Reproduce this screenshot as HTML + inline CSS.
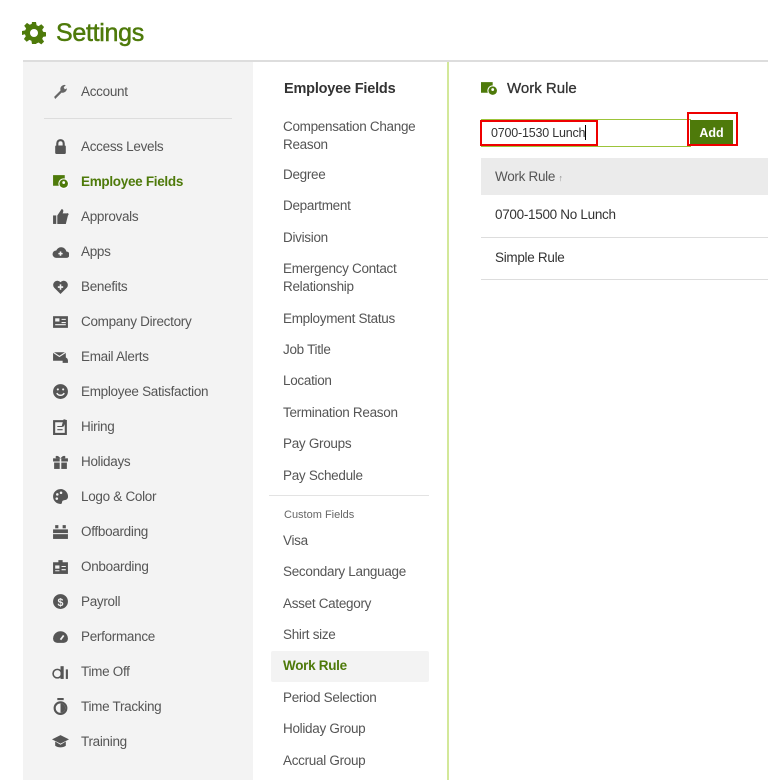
<!DOCTYPE html>
<html><head><meta charset="utf-8"><style>
*{margin:0;padding:0;box-sizing:border-box}
body{width:768px;height:780px;overflow:hidden;background:#fff;font-family:"Liberation Sans",sans-serif;color:#555;position:relative}
.a{position:absolute;white-space:nowrap}
.t{font-size:13.5px;letter-spacing:-0.3px;line-height:17px}
.ic{position:absolute;left:52px;width:17px;height:17px}
</style></head><body>
<svg class="a" style="left:22px;top:21px" width="24" height="24" viewBox="0 0 24 24"><path fill="#4e7a0a" d="M10 1h4l.6 3.2 2 .9 2.7-1.9 2.8 2.8-1.9 2.7.9 2 3.2.6v4l-3.2.6-.9 2 1.9 2.7-2.8 2.8-2.7-1.9-2 .9L14 23h-4l-.6-3.2-2-.9-2.7 1.9-2.8-2.8 1.9-2.7-.9-2L0 14v-4l3.2-.6.9-2L2.2 4.7 5 1.9l2.7 1.9 2-.9z"/><circle cx="12" cy="12" r="4" fill="#fff"/></svg>
<div class="a" style="left:56px;top:19px;font-size:25px;color:#4e7a0a;letter-spacing:-0.3px;-webkit-text-stroke:0.5px #4e7a0a">Settings</div>
<div class="a" style="left:23px;top:60px;width:745px;height:2px;background:#ddd"></div>
<div class="a" style="left:23px;top:62px;width:230px;height:718px;background:#f3f3f3"></div>
<div class="a" style="left:44px;top:118px;width:188px;height:1px;background:#ddd"></div>
<div class="a" style="left:447px;top:62px;width:2px;height:718px;background:#d3e89a"></div>

<div class="a t" style="left:81px;top:83px">Account</div>
<div class="a t" style="left:81px;top:138px">Access Levels</div>
<div class="a t" style="left:81px;top:173px;color:#4e7a0a;font-weight:bold">Employee Fields</div>
<div class="a t" style="left:81px;top:208px">Approvals</div>
<div class="a t" style="left:81px;top:243px">Apps</div>
<div class="a t" style="left:81px;top:278px">Benefits</div>
<div class="a t" style="left:81px;top:313px">Company Directory</div>
<div class="a t" style="left:81px;top:348px">Email Alerts</div>
<div class="a t" style="left:81px;top:383px">Employee Satisfaction</div>
<div class="a t" style="left:81px;top:418px">Hiring</div>
<div class="a t" style="left:81px;top:453px">Holidays</div>
<div class="a t" style="left:81px;top:488px">Logo &amp; Color</div>
<div class="a t" style="left:81px;top:523px">Offboarding</div>
<div class="a t" style="left:81px;top:558px">Onboarding</div>
<div class="a t" style="left:81px;top:593px">Payroll</div>
<div class="a t" style="left:81px;top:628px">Performance</div>
<div class="a t" style="left:81px;top:663px">Time Off</div>
<div class="a t" style="left:81px;top:698px">Time Tracking</div>
<div class="a t" style="left:81px;top:733px">Training</div>

<svg class="ic" style="top:83px" viewBox="0 0 16 16"><path fill="#666" d="M2 13l6-6a4 4 0 0 1 5-5l-2 2 1 2 2-1a4 4 0 0 1-5 4l-6 6z"/></svg>
<svg class="ic" style="top:138px" viewBox="0 0 16 16"><path fill="none" stroke="#555" stroke-width="2" d="M5 7V5a3 3 0 0 1 6 0v2"/><rect x="3" y="7" width="10" height="8" rx="1" fill="#555"/></svg>
<svg class="ic" style="top:173px" viewBox="0 0 16 16"><rect x="1" y="2" width="11" height="10" fill="#4e7a0a"/><circle cx="11" cy="10" r="5" fill="#fff"/><circle cx="11" cy="10" r="4" fill="#4e7a0a"/><circle cx="11" cy="9" r="1.3" fill="#fff"/></svg>
<svg class="ic" style="top:208px" viewBox="0 0 16 16"><rect x="1" y="7" width="3" height="8" fill="#555"/><path fill="#555" d="M5 7l4-6c2 0 2 2 1 4h4a1 1 0 0 1 1 2l-2 8H5z"/></svg>
<svg class="ic" style="top:243px" viewBox="0 0 16 16"><path fill="#555" d="M4 14a3.5 3.5 0 0 1 0-7 5 5 0 0 1 9.5 1 3 3 0 0 1 0 6z"/><path stroke="#f3f3f3" stroke-width="1.5" d="M8 8v4M6 10h4"/></svg>
<svg class="ic" style="top:278px" viewBox="0 0 16 16"><path fill="#555" d="M8 15L2 9a3.5 3.5 0 0 1 6-5 3.5 3.5 0 0 1 6 5z"/><path stroke="#f3f3f3" stroke-width="1.5" d="M8 6v5M5.5 8.5h5"/></svg>
<svg class="ic" style="top:313px" viewBox="0 0 16 16"><rect x="1" y="3" width="14" height="11" fill="#555"/><rect x="3" y="5" width="4" height="3" fill="#f3f3f3"/><path stroke="#f3f3f3" d="M9 6h4M9 9h4M3 11h10"/></svg>
<svg class="ic" style="top:348px" viewBox="0 0 16 16"><path fill="#555" d="M1 4h12v8H1z"/><path stroke="#f3f3f3" fill="none" d="M1 4l6 4 6-4"/><path fill="#555" d="M11 9a3 3 0 0 1 4 3v2h-5v-2z"/></svg>
<svg class="ic" style="top:383px" viewBox="0 0 16 16"><circle cx="8" cy="8" r="7" fill="#555"/><circle cx="5.5" cy="6" r="1" fill="#f3f3f3"/><circle cx="10.5" cy="6" r="1" fill="#f3f3f3"/><path d="M4.5 9.5a4 4 0 0 0 7 0" stroke="#f3f3f3" fill="none" stroke-width="1.4"/></svg>
<svg class="ic" style="top:418px" viewBox="0 0 16 16"><rect x="2" y="3" width="11" height="12" fill="none" stroke="#555" stroke-width="2"/><path stroke="#555" d="M5 8h5M5 11h5" /><path fill="#555" d="M11 1l3 1-3 6-2 0z"/></svg>
<svg class="ic" style="top:453px" viewBox="0 0 16 16"><rect x="1" y="5" width="14" height="3" fill="#555"/><rect x="2" y="9" width="12" height="6" fill="#555"/><path stroke="#f3f3f3" stroke-width="1.5" d="M8 5v10"/><path fill="#555" d="M8 5C5 1 2 3 4 5zM8 5c3-4 6-2 4 0z"/></svg>
<svg class="ic" style="top:488px" viewBox="0 0 16 16"><path fill="#555" d="M8 1a7 7 0 0 0 0 14c2 0 1-2 2-3s4 0 5-3A7 7 0 0 0 8 1z"/><circle cx="5" cy="6" r="1.2" fill="#f3f3f3"/><circle cx="8.5" cy="4.5" r="1.2" fill="#f3f3f3"/><circle cx="4.5" cy="10" r="1.2" fill="#f3f3f3"/></svg>
<svg class="ic" style="top:523px" viewBox="0 0 16 16"><rect x="1" y="6" width="14" height="9" fill="#555"/><rect x="3" y="2" width="3" height="3" fill="#555"/><rect x="10" y="2" width="3" height="3" fill="#555"/><path stroke="#f3f3f3" d="M1 10h14"/></svg>
<svg class="ic" style="top:558px" viewBox="0 0 16 16"><rect x="1" y="4" width="14" height="11" fill="#555"/><rect x="6" y="2" width="4" height="3" fill="#555"/><rect x="3" y="7" width="4" height="3" fill="#f3f3f3"/><path stroke="#f3f3f3" d="M9 8h4M9 11h4M3 12h4"/></svg>
<svg class="ic" style="top:593px" viewBox="0 0 16 16"><circle cx="8" cy="8" r="7" fill="#555"/><text x="8" y="12" font-size="10" text-anchor="middle" fill="#f3f3f3" font-family="Liberation Sans" font-weight="bold">$</text></svg>
<svg class="ic" style="top:628px" viewBox="0 0 16 16"><path fill="#555" d="M1 10a7 7 0 0 1 14 0 4 4 0 0 1-4 4H5a4 4 0 0 1-4-4z"/><path stroke="#f3f3f3" stroke-width="1.6" d="M8 11l3-4"/></svg>
<svg class="ic" style="top:663px" viewBox="0 0 16 16"><circle cx="5" cy="10" r="4" fill="none" stroke="#555" stroke-width="1.5"/><rect x="8" y="3" width="3" height="12" fill="#555"/><rect x="13" y="6" width="2" height="9" fill="#555"/></svg>
<svg class="ic" style="top:698px" viewBox="0 0 16 16"><rect x="5" y="0" width="6" height="2" fill="#555"/><circle cx="8" cy="9.5" r="5.5" fill="none" stroke="#555" stroke-width="2"/><path fill="#555" d="M8 9.5V5a4.5 4.5 0 0 1 0 9z"/></svg>
<svg class="ic" style="top:733px" viewBox="0 0 16 16"><path fill="#555" d="M0 6l8-4 8 4-8 4z"/><path fill="#555" d="M3 8v4c3 2 7 2 10 0V8l-5 3z"/></svg>

<div class="a" style="left:284px;top:81px;font-size:14.5px;font-weight:bold;color:#333;letter-spacing:-0.2px">Employee Fields</div>
<div class="a t" style="left:283px;top:118px;line-height:17.5px">Compensation Change<br>Reason</div>
<div class="a t" style="left:283px;top:166px">Degree</div>
<div class="a t" style="left:283px;top:197px">Department</div>
<div class="a t" style="left:283px;top:229px">Division</div>
<div class="a t" style="left:283px;top:260px;line-height:17.5px">Emergency Contact<br>Relationship</div>
<div class="a t" style="left:283px;top:310px">Employment Status</div>
<div class="a t" style="left:283px;top:341px">Job Title</div>
<div class="a t" style="left:283px;top:372px">Location</div>
<div class="a t" style="left:283px;top:404px">Termination Reason</div>
<div class="a t" style="left:283px;top:435px">Pay Groups</div>
<div class="a t" style="left:283px;top:467px">Pay Schedule</div>
<div class="a" style="left:269px;top:495px;width:160px;height:1px;background:#e3e3e3"></div>
<div class="a" style="left:284px;top:509px;font-size:11px;color:#666">Custom Fields</div>
<div class="a t" style="left:283px;top:532px">Visa</div>
<div class="a t" style="left:283px;top:563px">Secondary Language</div>
<div class="a t" style="left:283px;top:595px">Asset Category</div>
<div class="a t" style="left:283px;top:626px">Shirt size</div>
<div class="a" style="left:271px;top:651px;width:158px;height:31px;background:#f3f3f3;border-radius:2px"></div>
<div class="a t" style="left:283px;top:657px;color:#4e7a0a;font-weight:bold">Work Rule</div>
<div class="a t" style="left:283px;top:689px">Period Selection</div>
<div class="a t" style="left:283px;top:720px">Holiday Group</div>
<div class="a t" style="left:283px;top:752px">Accrual Group</div>

<svg class="a" style="left:481px;top:81px" width="17" height="15" viewBox="0 0 16 14"><rect x="0" y="1" width="11" height="10" fill="#4e7a0a"/><circle cx="11" cy="9" r="5" fill="#fff"/><circle cx="11" cy="9" r="4" fill="#4e7a0a"/><circle cx="11" cy="8" r="1.3" fill="#fff"/></svg>
<div class="a" style="left:507px;top:80px;font-size:15px;color:#333;-webkit-text-stroke:0.3px #333">Work Rule</div>
<div class="a" style="left:481px;top:119px;width:210px;height:28px;border:1px solid #9cc43a;border-right:none"></div>
<div class="a" style="left:491px;top:125px;font-size:12.5px;color:#333;letter-spacing:-0.2px">0700-1530 Lunch<span style="display:inline-block;width:1px;height:15px;background:#000;vertical-align:-3px"></span></div>
<div class="a" style="left:480px;top:120px;width:118px;height:26px;border:2px solid #e00"></div>
<div class="a" style="left:690px;top:120px;width:43px;height:26px;background:#4e7a0a;color:#fff;font-weight:bold;font-size:12.5px;text-align:center;line-height:26px">Add</div>
<div class="a" style="left:687px;top:112px;width:51px;height:34px;border:2px solid #e00"></div>
<div class="a" style="left:481px;top:158px;width:287px;height:37px;background:#ebebeb"></div>
<div class="a t" style="left:495px;top:168px;color:#555">Work Rule <span style="font-size:9px;color:#888">↑</span></div>
<div class="a t" style="left:495px;top:206px;color:#333">0700-1500 No Lunch</div>
<div class="a" style="left:481px;top:237px;width:287px;height:1px;background:#ddd"></div>
<div class="a t" style="left:495px;top:249px;color:#333">Simple Rule</div>
<div class="a" style="left:481px;top:279px;width:287px;height:1px;background:#ddd"></div>
</body></html>
